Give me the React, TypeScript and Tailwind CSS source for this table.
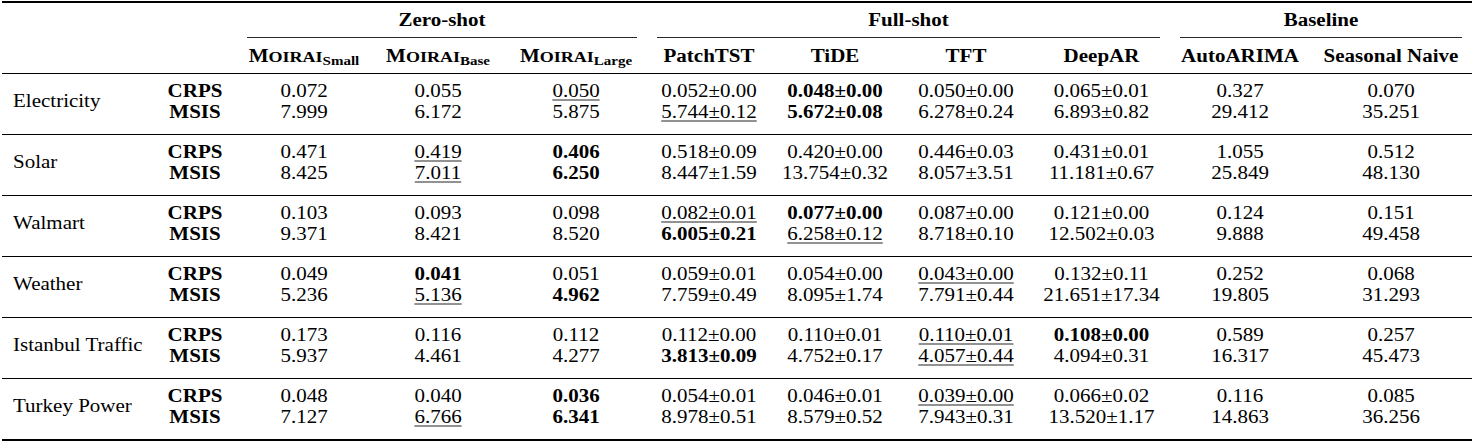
import React from "react";

const COLS =
  "grid grid-cols-[151px_84px_134px_134px_142px_124px_128px_134px_137px_140px_162px]";

const SQ = "inline-block scale-y-85 whitespace-nowrap";

type Group = { name: string; crps: string[]; msis: string[] };

const groups: Group[] = [
  {
    name: "Electricity",
    crps: ["0.072", "0.055", "_0.050", "0.052±0.00", "*0.048±0.00", "0.050±0.00", "0.065±0.01", "0.327", "0.070"],
    msis: ["7.999", "6.172", "5.875", "_5.744±0.12", "*5.672±0.08", "6.278±0.24", "6.893±0.82", "29.412", "35.251"],
  },
  {
    name: "Solar",
    crps: ["0.471", "_0.419", "*0.406", "0.518±0.09", "0.420±0.00", "0.446±0.03", "0.431±0.01", "1.055", "0.512"],
    msis: ["8.425", "_7.011", "*6.250", "8.447±1.59", "13.754±0.32", "8.057±3.51", "11.181±0.67", "25.849", "48.130"],
  },
  {
    name: "Walmart",
    crps: ["0.103", "0.093", "0.098", "_0.082±0.01", "*0.077±0.00", "0.087±0.00", "0.121±0.00", "0.124", "0.151"],
    msis: ["9.371", "8.421", "8.520", "*6.005±0.21", "_6.258±0.12", "8.718±0.10", "12.502±0.03", "9.888", "49.458"],
  },
  {
    name: "Weather",
    crps: ["0.049", "*0.041", "0.051", "0.059±0.01", "0.054±0.00", "_0.043±0.00", "0.132±0.11", "0.252", "0.068"],
    msis: ["5.236", "_5.136", "*4.962", "7.759±0.49", "8.095±1.74", "7.791±0.44", "21.651±17.34", "19.805", "31.293"],
  },
  {
    name: "Istanbul Traffic",
    crps: ["0.173", "0.116", "0.112", "0.112±0.00", "0.110±0.01", "_0.110±0.01", "*0.108±0.00", "0.589", "0.257"],
    msis: ["5.937", "4.461", "4.277", "*3.813±0.09", "4.752±0.17", "_4.057±0.44", "4.094±0.31", "16.317", "45.473"],
  },
  {
    name: "Turkey Power",
    crps: ["0.048", "0.040", "*0.036", "0.054±0.01", "0.046±0.01", "_0.039±0.00", "0.066±0.02", "0.116", "0.085"],
    msis: ["7.127", "_6.766", "*6.341", "8.978±0.51", "8.579±0.52", "7.943±0.31", "13.520±1.17", "14.863", "36.256"],
  },
];

function Val({ v }: { v: string }) {
  if (v.startsWith("*")) {
    return <span className={`${SQ} font-bold`}>{v.slice(1)}</span>;
  }
  if (v.startsWith("_")) {
    return (
      <span className={`${SQ} underline decoration-1 underline-offset-[3px]`}>
        {v.slice(1)}
      </span>
    );
  }
  return <span className={SQ}>{v}</span>;
}

function Moirai({ size }: { size: string }) {
  return (
    <span className={`${SQ} font-bold`}>
      M<span className="text-[18px]">OIRAI</span>
      <span className="relative top-[3px] text-[15px]">{size}</span>
    </span>
  );
}

function Line({ children, className = "" }: { children: React.ReactNode; className?: string }) {
  return <div className={`h-[21px] leading-[21px] text-center ${className}`}>{children}</div>;
}

function GroupHead({ label, span }: { label: string; span: string }) {
  return (
    <div className={`${span} flex flex-col pt-[7px]`}>
      <Line>
        <span className={`${SQ} font-bold`}>{label}</span>
      </Line>
      <div className="mx-[10px] mt-[6px] h-px bg-[#2a2a2a]" />
    </div>
  );
}

const subHeads: React.ReactNode[] = [
  <Moirai key="s" size="Small" />,
  <Moirai key="b" size="Base" />,
  <Moirai key="l" size="Large" />,
  "PatchTST",
  "TiDE",
  "TFT",
  "DeepAR",
  "AutoARIMA",
  "Seasonal Naive",
];

export default function App() {
  return (
    <div className="w-[1477px] h-[443px] bg-white pl-[2px] pt-px font-['Liberation_Serif','Times_New_Roman',serif] text-[21px] text-black">
      <div className="w-[1470px] border-y-2 border-black">
        {/* header row 1 */}
        <div className={COLS}>
          <div className="col-span-2" />
          <GroupHead label="Zero-shot" span="col-span-3" />
          <GroupHead label="Full-shot" span="col-span-4" />
          <GroupHead label="Baseline" span="col-span-2" />
        </div>
        {/* header row 2 */}
        <div className={`${COLS} pt-[8px] pb-[6px] border-b border-black`}>
          <div className="col-span-2" />
          {subHeads.map((h, i) => (
            <Line key={i}>
              {typeof h === "string" ? <span className={`${SQ} font-bold`}>{h}</span> : h}
            </Line>
          ))}
        </div>
        {/* body */}
        {groups.map((g, gi) => (
          <div
            key={g.name}
            className={`${COLS} grid-rows-[21px_21px] pt-[7px] pb-[11px] ${
              gi < groups.length - 1 ? "border-b border-black" : ""
            }`}
          >
            <div className="col-start-1 row-start-1 row-span-2 flex items-center pl-[11px]">
              <span className={SQ}>{g.name}</span>
            </div>
            <Line className="col-start-2 row-start-1">
              <span className={`${SQ} font-bold`}>CRPS</span>
            </Line>
            {g.crps.map((v, i) => (
              <Line key={`c${i}`} className="row-start-1">
                <Val v={v} />
              </Line>
            ))}
            <Line className="col-start-2 row-start-2">
              <span className={`${SQ} font-bold`}>MSIS</span>
            </Line>
            {g.msis.map((v, i) => (
              <Line key={`m${i}`} className="row-start-2">
                <Val v={v} />
              </Line>
            ))}
          </div>
        ))}
      </div>
    </div>
  );
}
